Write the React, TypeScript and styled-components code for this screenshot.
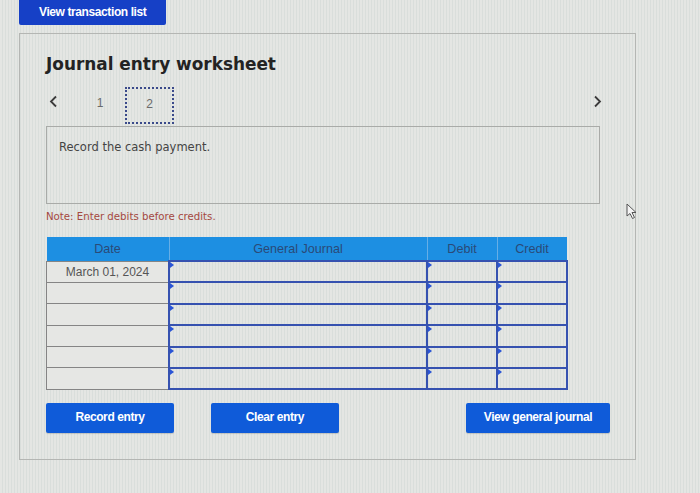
import React from 'react';
import styled, { createGlobalStyle } from 'styled-components';

const GlobalStyle = createGlobalStyle`
  html, body {
    margin: 0;
    padding: 0;
    background: #e1e4e0;
  }
  body {
    font-family: "Liberation Sans", Arial, sans-serif;
    width: 700px;
    height: 493px;
    overflow: hidden;
  }
`;

const Page = styled.div`
  position: relative;
  padding-left: 19px;
  height: 493px;
  box-sizing: border-box;
  background: repeating-linear-gradient(
    90deg,
    #e4e6e3 0px,
    #e4e6e3 2px,
    #d9dedb 2px,
    #d9dedb 3px
  );
`;

const TopButton = styled.button`
  display: block;
  width: 147px;
  height: 25px;
  border: none;
  border-radius: 0 0 2px 2px;
  background: #1640c6;
  color: #fff;
  font-family: "Liberation Sans", Arial, sans-serif;
  font-weight: bold;
  font-size: 12px;
  letter-spacing: -0.4px;
  text-align: left;
  padding: 0 0 2px 20px;
`;

const Panel = styled.div`
  margin-top: 8px;
  width: 617px;
  height: 427px;
  box-sizing: border-box;
  border: 1px solid #b4b6b3;
  padding: 17px 25px 0 26px;
`;

const Title = styled.h1`
  margin: 0;
  font-family: "DejaVu Sans", Verdana, sans-serif;
  font-weight: bold;
  font-size: 16.9px;
  line-height: 26px;
  color: #232323;
`;

const NavRow = styled.div`
  display: flex;
  align-items: center;
  margin-top: 10px;
  width: 554px;
  height: 37px;
`;

const NavArrow = styled.span<{ $right?: boolean }>`
  display: flex;
  width: 14px;
  justify-content: center;
  margin-top: -9px;
  margin-left: ${({ $right }) => ($right ? 'auto' : '0')};
  margin-right: ${({ $right }) => ($right ? '-4px' : '0')};
`;

const PageNum = styled.span<{ $active?: boolean }>`
  display: flex;
  align-items: center;
  justify-content: center;
  box-sizing: border-box;
  width: ${({ $active }) => ($active ? '49px' : '24px')};
  height: 37px;
  padding-bottom: ${({ $active }) => ($active ? '3px' : '6px')};
  font-family: "Liberation Sans", Arial, sans-serif;
  font-size: 12px;
  color: #6a6a6a;
  border: ${({ $active }) => ($active ? '2px dotted #3a4a8a' : 'none')};
  margin-left: ${({ $active }) => ($active ? '13px' : '28px')};
`;

const PromptBox = styled.div`
  margin-top: 2px;
  width: 554px;
  height: 78px;
  box-sizing: border-box;
  border: 1px solid #a9aba8;
  padding: 13px 12px;
  font-family: "DejaVu Sans", Verdana, sans-serif;
  font-size: 11.5px;
  color: #444;
`;

const Note = styled.p`
  margin: 6px 0 0;
  font-family: "DejaVu Sans", Verdana, sans-serif;
  font-size: 10.2px;
  color: #a4483f;
  line-height: 13px;
`;

const Table = styled.table`
  margin-top: 14px;
  border-collapse: collapse;
  table-layout: fixed;
  width: 517px;
`;

const HeadCell = styled.th<{ $w: number }>`
  width: ${({ $w }) => $w}px;
  height: 23px;
  padding: 0;
  background: #1d8fe2;
  color: #2a4a78;
  font-family: "Liberation Sans", Arial, sans-serif;
  font-weight: normal;
  font-size: 12.6px;
  border-left: 1px solid #66aee6;
  &:first-child {
    border-left: none;
  }
`;

const DateCell = styled.td`
  padding: 0;
  border: 1px solid #858585;
  background: #e6e7e4;
  text-align: center;
  font-family: "Liberation Sans", Arial, sans-serif;
  font-size: 12px;
  color: #555;
`;

const InputCell = styled.td`
  position: relative;
  height: 19.4px;
  padding: 0;
  border: 2px solid #3652b0;
  &::before {
    content: '';
    position: absolute;
    left: 0;
    top: 0;
    border-left: 4px solid #2a55d6;
    border-top: 3px solid transparent;
    border-bottom: 3px solid transparent;
  }
`;

const ButtonRow = styled.div`
  display: flex;
  margin-top: 13px;
  gap: 37px;
  width: 564px;
`;

const ActionButton = styled.button<{ $w: number }>`
  width: ${({ $w }) => $w}px;
  height: 30px;
  border: none;
  border-radius: 2px;
  background: #0f5bd9;
  color: #fff;
  font-family: "Liberation Sans", Arial, sans-serif;
  font-weight: bold;
  font-size: 12px;
  letter-spacing: -0.4px;
  padding: 0 0 2px;
  box-shadow: 0 1px 1px rgba(0, 0, 0, 0.15);
  &:last-child {
    margin-left: auto;
  }
`;

const Cursor = styled.svg`
  position: absolute;
  left: 626px;
  top: 203px;
`;

const Chevron = ({ right }: { right?: boolean }) => (
  <svg width="9" height="13" viewBox="0 0 9 13">
    <path
      d={right ? 'M2 1.5 L7 6.5 L2 11.5' : 'M7 1.5 L2 6.5 L7 11.5'}
      fill="none"
      stroke="#3b3b3b"
      strokeWidth="1.8"
    />
  </svg>
);

const rows = ['March 01, 2024', '', '', '', '', ''];

const App: React.FC = () => {
  return (
    <Page>
      <GlobalStyle />
      <TopButton>View transaction list</TopButton>
      <Panel>
        <Title>Journal entry worksheet</Title>
        <NavRow>
          <NavArrow><Chevron /></NavArrow>
          <PageNum>1</PageNum>
          <PageNum $active>2</PageNum>
          <NavArrow $right><Chevron right /></NavArrow>
        </NavRow>
        <PromptBox>Record the cash payment.</PromptBox>
        <Note>Note: Enter debits before credits.</Note>
        <Table>
          <thead>
            <tr>
              <HeadCell $w={122}>Date</HeadCell>
              <HeadCell $w={257}>General Journal</HeadCell>
              <HeadCell $w={69}>Debit</HeadCell>
              <HeadCell $w={69}>Credit</HeadCell>
            </tr>
          </thead>
          <tbody>
            {rows.map((date, i) => (
              <tr key={i}>
                <DateCell>{date}</DateCell>
                <InputCell />
                <InputCell />
                <InputCell />
              </tr>
            ))}
          </tbody>
        </Table>
        <ButtonRow>
          <ActionButton $w={128}>Record entry</ActionButton>
          <ActionButton $w={128}>Clear entry</ActionButton>
          <ActionButton $w={144}>View general journal</ActionButton>
        </ButtonRow>
      </Panel>
      <Cursor width="13" height="17" viewBox="0 0 13 17">
        <path
          d="M1 1 L1 13 L4 10.5 L6.5 15.5 L8.5 14.5 L6 9.5 L10 9.5 Z"
          fill="#f4f4f4"
          stroke="#555"
          strokeWidth="1"
        />
      </Cursor>
    </Page>
  );
};

export default App;
